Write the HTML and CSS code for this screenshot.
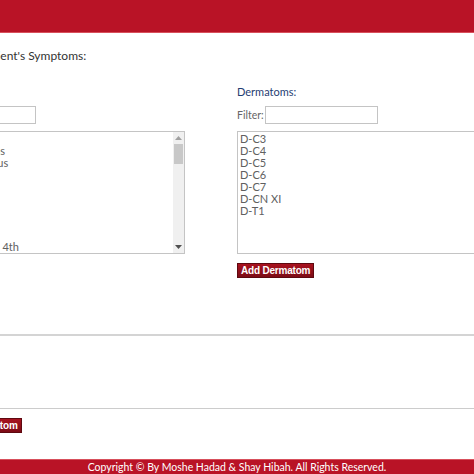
FILE: index.html
```html
<!DOCTYPE html>
<html lang="en">
<head>
<meta charset="utf-8">
<title>Patient Symptoms</title>
<link rel="stylesheet" href="styles.css">
</head>
<body>
<header class="topbar"></header>
<main class="content">
  <h2 class="title">Patient's Symptoms:</h2>
  <div class="columns">
    <section class="col">
      <h3 class="col-label">Symptoms:</h3>
      <div class="filter-row">
        <label class="filter-label">Filter:</label>
        <input class="filter-input" type="text">
      </div>
      <div class="listbox" role="listbox">
        <div class="items">
          <div class="opt">Back Pain</div>
          <div class="opt">Weakness in the Arms</div>
          <div class="opt">Pains in the Esophagus</div>
          <div class="opt">Headache</div>
          <div class="opt">Neck Pain</div>
          <div class="opt">Dizziness</div>
          <div class="opt">Tingling</div>
          <div class="opt">Arm Pain</div>
          <div class="opt">Fatigue</div>
          <div class="opt">Numbness of Fingers 4th</div>
          <div class="opt">Numbness of Fingers 5th</div>
          <div class="opt">Shoulder Pain</div>
        </div>
        <div class="scrollbar" aria-hidden="true">
          <div class="sb-btn">
            <svg width="7" height="4" viewBox="0 0 7 4"><path d="M0 4 L3.5 0 L7 4 Z" fill="#a0a0a0"/></svg>
          </div>
          <div class="sb-thumb"></div>
          <div class="sb-track"></div>
          <div class="sb-btn">
            <svg width="7" height="4" viewBox="0 0 7 4"><path d="M0 0 L3.5 4 L7 0 Z" fill="#505050"/></svg>
          </div>
        </div>
      </div>
    </section>
    <section class="col">
      <h3 class="col-label">Dermatoms:</h3>
      <div class="filter-row">
        <label class="filter-label">Filter:</label>
        <input class="filter-input" type="text">
      </div>
      <div class="listbox" role="listbox">
        <div class="items">
          <div class="opt">D-C3</div>
          <div class="opt">D-C4</div>
          <div class="opt">D-C5</div>
          <div class="opt">D-C6</div>
          <div class="opt">D-C7</div>
          <div class="opt">D-CN XI</div>
          <div class="opt">D-T1</div>
        </div>
      </div>
      <button class="btn" type="button">Add Dermatom</button>
    </section>
  </div>
  <div class="selected-box"></div>
  <div class="actions">
    <button class="btn" type="button">Add Symptom</button>
  </div>
</main>
<footer class="footer">Copyright © By Moshe Hadad &amp; Shay Hibah. All Rights Reserved.</footer>
</body>
</html>
```
FILE: styles.css
```css
html, body {
  margin: 0;
  padding: 0;
  overflow: hidden;
  background: #ffffff;
  font-family: "Lato", "Open Sans", sans-serif;
  color: #555555;
}

.topbar {
  height: 32px;
  background: #b91326;
  border-bottom: 1px solid #d8505c;
}

.content {
  margin-left: -105px;
  width: 640px;
}

.title {
  margin: 16px 0 0 85px;
  font-size: 12px;
  line-height: 14px;
  font-weight: 400;
  color: #333333;
}

.columns {
  display: flex;
  gap: 52px;
  margin-top: 22px;
}

.col {
  width: 290px;
  display: flex;
  flex-direction: column;
  align-items: flex-start;
}

.col-label {
  margin: 0;
  font-size: 11px;
  line-height: 14px;
  font-weight: 400;
  color: #1f3d73;
}

.filter-row {
  display: flex;
  align-items: center;
  margin-top: 7px;
  height: 18px;
}

.filter-label {
  width: 28px;
  font-size: 10.5px;
  color: #666666;
}

.filter-input {
  box-sizing: border-box;
  width: 113px;
  height: 18px;
  margin: 0;
  border: 1px solid #c4c4c4;
  padding: 1px 3px;
  font: inherit;
  font-size: 11px;
}

.listbox {
  box-sizing: border-box;
  width: 290px;
  height: 123px;
  margin-top: 7px;
  border: 1px solid #c4c4c4;
  display: flex;
  overflow: hidden;
}

.items {
  flex: 1;
  padding: 1px 0 0 2px;
  font-size: 11px;
  line-height: 12px;
  color: #606060;
  overflow: hidden;
}

.opt {
  white-space: nowrap;
  height: 12px;
}

.scrollbar {
  width: 11px;
  display: flex;
  flex-direction: column;
  background: #f0f0f0;
}

.sb-btn {
  height: 12px;
  display: flex;
  align-items: center;
  justify-content: center;
}

.sb-thumb {
  height: 20px;
  margin: 0 1px;
  background: #c8c8c8;
}

.sb-track {
  flex: 1;
}

.btn {
  margin-top: 9px;
  height: 15px;
  padding: 0 3px;
  border: 1px solid #5e0910;
  background: linear-gradient(#a8121f, #7c0c16);
  color: #ffffff;
  font-family: "Liberation Sans", Arial, sans-serif;
  font-size: 10px;
  line-height: 13px;
  font-weight: 700;
  letter-spacing: -0.2px;
}

.selected-box {
  margin-top: 56px;
  height: 72px;
  border-top: 2px solid #d4d4d4;
  border-bottom: 1px solid #cccccc;
}

.actions {
  display: flex;
  margin-left: 53px;
}

.footer {
  margin-top: 26px;
  height: 20px;
  background: #b91326;
  border-top: 1px solid #d8505c;
  color: #ffffff;
  font-size: 10.5px;
  line-height: 14px;
  text-align: center;
}
```
